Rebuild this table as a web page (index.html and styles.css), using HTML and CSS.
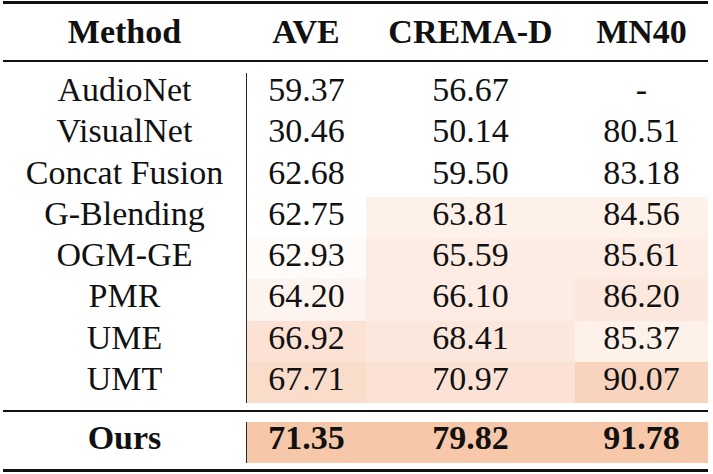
FILE: index.html
```html
<!DOCTYPE html>
<html>
<head>
<meta charset="utf-8">
<link rel="stylesheet" href="styles.css">
</head>
<body>
<div class="tbl">
  <div class="rule thick"></div>
  <div class="row head">
    <div class="cell">Method</div>
    <div class="cell">AVE</div>
    <div class="cell">CREMA-D</div>
    <div class="cell">MN40</div>
  </div>
  <div class="rule mid"></div>
  <div class="body">
    <div class="row">
      <div class="cell">AudioNet</div>
      <div class="cell num">59.37</div>
      <div class="cell">56.67</div>
      <div class="cell">-</div>
    </div>
    <div class="row">
      <div class="cell">VisualNet</div>
      <div class="cell num">30.46</div>
      <div class="cell">50.14</div>
      <div class="cell">80.51</div>
    </div>
    <div class="row">
      <div class="cell">Concat Fusion</div>
      <div class="cell num">62.68</div>
      <div class="cell">59.50</div>
      <div class="cell">83.18</div>
    </div>
    <div class="row">
      <div class="cell">G-Blending</div>
      <div class="cell num">62.75</div>
      <div class="cell h2">63.81</div>
      <div class="cell h2">84.56</div>
    </div>
    <div class="row">
      <div class="cell">OGM-GE</div>
      <div class="cell num h0">62.93</div>
      <div class="cell h3">65.59</div>
      <div class="cell h3">85.61</div>
    </div>
    <div class="row">
      <div class="cell">PMR</div>
      <div class="cell num h1">64.20</div>
      <div class="cell h3">66.10</div>
      <div class="cell h4">86.20</div>
    </div>
    <div class="row">
      <div class="cell">UME</div>
      <div class="cell num h5">66.92</div>
      <div class="cell h4">68.41</div>
      <div class="cell h2">85.37</div>
    </div>
    <div class="row">
      <div class="cell">UMT</div>
      <div class="cell num h6">67.71</div>
      <div class="cell h5">70.97</div>
      <div class="cell h7">90.07</div>
    </div>
  </div>
  <div class="rule mid"></div>
  <div class="foot">
    <div class="row ours">
      <div class="cell">Ours</div>
      <div class="cell num h8">71.35</div>
      <div class="cell h8">79.82</div>
      <div class="cell h8">91.78</div>
    </div>
  </div>
  <div class="rule thick"></div>
</div>
</body>
</html>
```
FILE: styles.css
```css
html, body {
  margin: 0;
  padding: 0;
  background: #ffffff;
}
body {
  padding: 1px 0 0 3px;
  font-family: "Liberation Serif", "Times New Roman", serif;
  font-size: 34px;
  color: #111111;
}
.tbl {
  width: 705px;
  display: flex;
  flex-direction: column;
}
.rule {
  background: #111111;
}
.rule.thick {
  height: 3px;
}
.rule.mid {
  height: 2px;
}
.row {
  display: grid;
  grid-template-columns: 243px 120px 209px 133px;
  height: 41.25px;
}
.cell {
  text-align: center;
  line-height: 34px;
  white-space: nowrap;
}
.head {
  height: 56px;
  font-weight: bold;
}
.head .cell {
  line-height: 56px;
}
.body {
  display: flex;
  flex-direction: column;
  padding: 11px 0 7px;
}
.num {
  border-left: 1px solid #2a2a2a;
}
.foot {
  padding: 10px 0 6px;
}
.row.ours {
  height: 41px;
  font-weight: bold;
}
.ours .cell {
  line-height: 31px;
}
.h0 { background: #fffbf8; }
.h1 { background: #fef4ef; }
.h2 { background: #fdf1ea; }
.h3 { background: #fcece3; }
.h4 { background: #fbe7dc; }
.h5 { background: #fbe2d4; }
.h6 { background: #fadcca; }
.h7 { background: #f8d4be; }
.h8 { background: #f6c8a9; }
```
